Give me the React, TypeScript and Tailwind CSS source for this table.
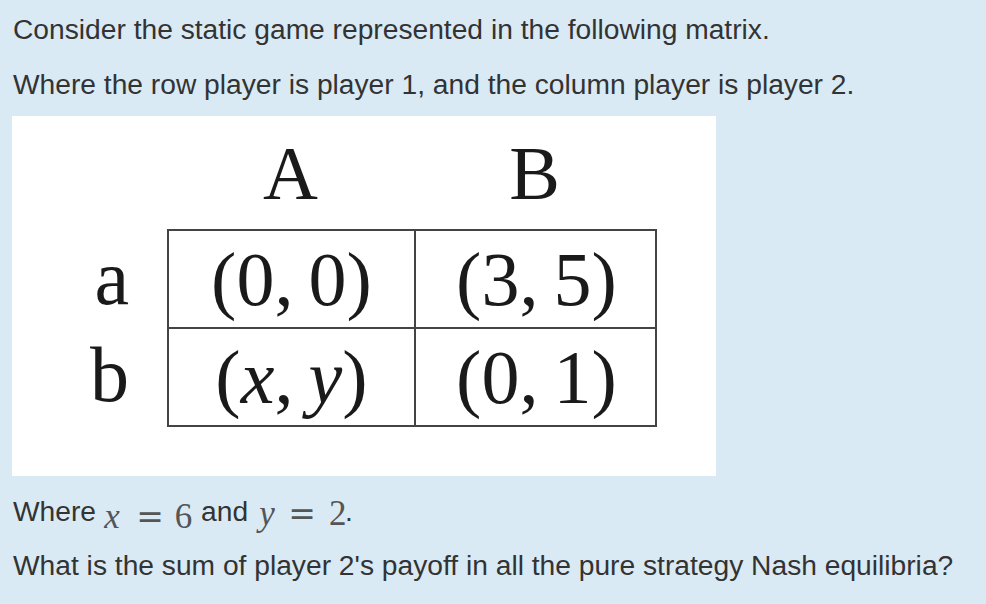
import React from 'react';

const sans = { fontFamily: '"Liberation Sans", Arial, sans-serif' };
const serif = { fontFamily: '"Liberation Serif", "Times New Roman", serif' };
const eq = { fontFamily: '"DejaVu Sans", sans-serif' };

function Cell({ children, className = '' }: { children: React.ReactNode; className?: string }) {
  return (
    <div className={`flex items-center justify-center text-[76px] leading-none text-[#1a1a1a] ${className}`} style={serif}>
      {children}
    </div>
  );
}

export default function App() {
  return (
    <div className="min-h-screen w-full bg-[#d9eaf5] text-[#333]" style={sans}>
      <div className="pl-[13px] pt-[14px]">
        <p className="text-[28.2px] leading-[30px] mb-[25px]">
          Consider the static game represented in the following matrix.
        </p>
        <p className="text-[28.2px] leading-[30px]">
          Where the row player is player 1, and the column player is player 2.
        </p>
      </div>

      {/* payoff matrix */}
      <div className="ml-[12px] mt-[17px] w-[704px] h-[360px] bg-white">
        <div className="grid grid-cols-[155px_247px_241px] h-[113px] pt-[19px]">
          <div />
          <Cell className="items-start">A</Cell>
          <Cell className="items-start">B</Cell>
        </div>
        <div className="grid grid-cols-[155px_490px]">
          <div className="flex flex-col">
            <div className="h-[98px] flex items-center justify-end pr-[38px] text-[78px] leading-none text-[#1a1a1a]" style={serif}>a</div>
            <div className="h-[96px] flex items-center justify-end pr-[38px] text-[78px] leading-none text-[#1a1a1a]" style={serif}>b</div>
          </div>
          <div className="grid grid-cols-[247px_241px] grid-rows-[98px_96px] border-2 border-[#444]">
            <Cell className="border-r-2 border-b-2 border-[#444]">(0,&thinsp;0)</Cell>
            <Cell className="border-b-2 border-[#444]">(3,&thinsp;5)</Cell>
            <Cell className="border-r-2 border-[#444]">
              (<i>x</i>,&thinsp;<i>y</i>)
            </Cell>
            <Cell>(0,&thinsp;1)</Cell>
          </div>
        </div>
      </div>

      <div className="pl-[13px] pt-[20px]">
        <p className="text-[28.2px] leading-[30px] h-[30px] mb-[24px] whitespace-nowrap">
          Where
          <span className="text-[35px] leading-[30px] text-[#555] align-[-7px]" style={serif}>
            <i className="inline-block w-[20px] ml-[6px] text-center">x</i>
            <span className="inline-block w-[28px] ml-[14px] text-center text-[33px]" style={eq}>=</span>
            <span className="inline-block w-[19px] ml-[10px] text-center">6</span>
          </span>
          <span className="ml-[8px]">and</span>
          <span className="text-[35px] leading-[30px] text-[#555] align-[-4px]" style={serif}>
            <i className="inline-block w-[18px] ml-[10px] text-center">y</i>
            <span className="inline-block w-[28px] ml-[12px] text-center text-[33px]" style={eq}>=</span>
            <span className="inline-block w-[16px] ml-[13px] text-center">2</span>
          </span>
          .
        </p>
        <p className="text-[28.2px] leading-[30px]">
          What is the sum of player 2's payoff in all the pure strategy Nash equilibria?
        </p>
      </div>
    </div>
  );
}
